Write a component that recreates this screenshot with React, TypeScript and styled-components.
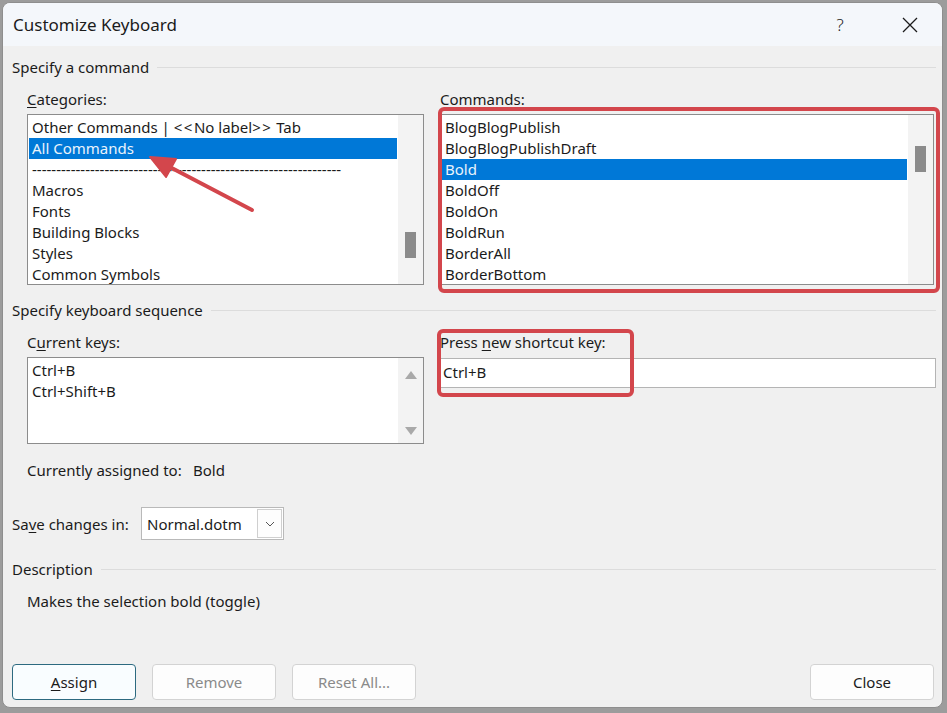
import React from "react";
import styled, { createGlobalStyle, css } from "styled-components";

const Global = createGlobalStyle`
  html, body { margin: 0; padding: 0; background: #9c9c9c; }
  body { font-family: "Noto Sans", "Open Sans", sans-serif; color: #1b1b1b; }
  * { box-sizing: border-box; }
`;

const Stage = styled.div`
  width: 947px;
  height: 713px;
  padding: 2px 0 0 2px;
  overflow: hidden;
`;

const Window = styled.div`
  position: relative;
  width: 941px;
  height: 706px;
  border: 1px solid #8e8e8e;
  border-radius: 8px;
  background: #f0f0f0;
  overflow: hidden;
  display: flex;
  flex-direction: column;
  font-size: 15px;
`;

const TitleBar = styled.div`
  height: 43px;
  flex: none;
  display: flex;
  align-items: center;
  padding-left: 10px;
  background: #f4f7fb;
`;

const Title = styled.div`
  font-size: 17px;
  flex: 1;
  padding-bottom: 1px;
`;

const TitleButton = styled.div<{ $w: number }>`
  width: ${(p) => p.$w}px;
  height: 43px;
  display: flex;
  align-items: center;
  justify-content: center;
  font-size: 17px;
  font-weight: 300;
  color: #222;
`;

const Content = styled.div`
  flex: 1;
  display: flex;
  flex-direction: column;
  padding: 0 6px 7px 9px;
`;

const GroupHeader = styled.div<{ $mt: number }>`
  display: flex;
  align-items: center;
  gap: 8px;
  height: 20px;
  margin-top: ${(p) => p.$mt}px;
  &::after {
    content: "";
    flex: 1;
    height: 1px;
    background: #dcdcdc;
  }
`;

const Indented = styled.div<{ $mt: number }>`
  margin-top: ${(p) => p.$mt}px;
  margin-left: 15px;
  display: grid;
  grid-template-columns: 397px 1fr;
  column-gap: 16px;
`;

const Column = styled.div`
  position: relative;
  display: flex;
  flex-direction: column;
`;

const Label = styled.div`
  height: 18px;
  line-height: 18px;
  margin-bottom: 6px;
  white-space: nowrap;
`;

const U = styled.span`
  text-decoration: underline;
  text-underline-offset: 2px;
`;

const ListBox = styled.div<{ $h: number; $w?: number }>`
  position: relative;
  height: ${(p) => p.$h}px;
  ${(p) => p.$w && `width: ${p.$w}px;`}
  background: #fff;
  border: 1px solid #8c8c8c;
  display: flex;
`;

const Items = styled.div`
  flex: 1;
  padding-top: 2px;
  overflow: hidden;
`;

const Item = styled.div<{ $sel?: boolean }>`
  height: 21px;
  line-height: 21px;
  padding-left: 3px;
  margin: 0 1px;
  white-space: nowrap;
  ${(p) =>
    p.$sel &&
    css`
      background: #0078d7;
      color: #eaf3fc;
    `}
`;

const Angle = styled.span`
  letter-spacing: 1.5px;
`;

const ScrollTrack = styled.div`
  width: 25px;
  flex: none;
  background: #f3f3f3;
  position: relative;
  display: flex;
  flex-direction: column;
  align-items: center;
`;

const Thumb = styled.div<{ $top: number }>`
  position: absolute;
  left: 7px;
  top: ${(p) => p.$top}px;
  width: 11px;
  height: 26px;
  background: #8b8b8b;
`;

const ArrowBtn = styled.div`
  height: 21px;
  width: 100%;
  display: flex;
  align-items: center;
  justify-content: center;
  margin-top: 6px;
  &:last-child {
    margin-top: auto;
    margin-bottom: 2px;
  }
`;

const TextInput = styled.div`
  margin-top: 1px;
  height: 30px;
  background: #fff;
  border: 1px solid #b4b4b4;
  padding-left: 2px;
  line-height: 27px;
`;

const Annotation = styled.div<{ $l: number; $t: number; $w: number; $h: number }>`
  position: absolute;
  left: ${(p) => p.$l}px;
  top: ${(p) => p.$t}px;
  width: ${(p) => p.$w}px;
  height: ${(p) => p.$h}px;
  border: 4px solid #d3464c;
  border-radius: 6px;
  pointer-events: none;
`;

const InfoRow = styled.div<{ $mt: number; $ml: number }>`
  display: flex;
  align-items: center;
  margin-top: ${(p) => p.$mt}px;
  margin-left: ${(p) => p.$ml}px;
  height: 18px;
  white-space: nowrap;
`;

const InfoLabel = styled.span<{ $w: number }>`
  width: ${(p) => p.$w}px;
  flex: none;
`;

const SaveRow = styled.div`
  display: flex;
  align-items: center;
  margin-top: 28px;
  height: 33px;
`;

const Select = styled.div`
  width: 143px;
  height: 33px;
  background: #fff;
  border: 1px solid #b9b9b9;
  display: flex;
  align-items: center;
  padding: 1px 1px 1px 5px;
`;

const SelectText = styled.span`
  flex: 1;
`;

const DropBtn = styled.div`
  width: 25px;
  height: 29px;
  border: 1px solid #cfcfcf;
  background: #fdfdfd;
  display: flex;
  align-items: center;
  justify-content: center;
`;

const ButtonRow = styled.div`
  margin-top: auto;
  display: flex;
  gap: 16px;
  padding-right: 2px;
`;

const Button = styled.div<{ $disabled?: boolean; $default?: boolean }>`
  width: 124px;
  height: 36px;
  border-radius: 4px;
  background: #fdfdfd;
  border: 1px solid #d3d3d3;
  display: flex;
  align-items: center;
  justify-content: center;
  color: ${(p) => (p.$disabled ? "#8a8a8a" : "#1b1b1b")};
  ${(p) =>
    p.$default &&
    css`
      border-color: #2d6a80;
      background: #f9fdff;
    `}
`;

const Spacer = styled.div`
  flex: 1;
`;

const Overlay = styled.svg`
  position: absolute;
  left: 0;
  top: 0;
  pointer-events: none;
`;

const categories: React.ReactNode[] = [
  <>
    Other Commands | <Angle>{"<<"}</Angle>No label<Angle>{">>"}</Angle> Tab
  </>,
  "All Commands",
  "-".repeat(64),
  "Macros",
  "Fonts",
  "Building Blocks",
  "Styles",
  "Common Symbols",
];

const commands = [
  "BlogBlogPublish",
  "BlogBlogPublishDraft",
  "Bold",
  "BoldOff",
  "BoldOn",
  "BoldRun",
  "BorderAll",
  "BorderBottom",
];

export default function App() {
  return (
    <>
      <Global />
      <Stage>
        <Window>
          <TitleBar>
            <Title>Customize Keyboard</Title>
            <TitleButton $w={76}>?</TitleButton>
            <TitleButton $w={64}>
              <svg width="16" height="16" viewBox="0 0 16 16">
                <path d="M1 1L15 15M15 1L1 15" stroke="#1b1b1b" strokeWidth="1.3" />
              </svg>
            </TitleButton>
          </TitleBar>
          <Content>
            <GroupHeader $mt={11}>Specify a command</GroupHeader>
            <Indented $mt={13}>
              <Column>
                <Label>
                  <U>C</U>ategories:
                </Label>
                <ListBox $h={171}>
                  <Items>
                    {categories.map((c, i) => (
                      <Item key={i} $sel={i === 1}>
                        {c}
                      </Item>
                    ))}
                  </Items>
                  <ScrollTrack>
                    <Thumb $top={117} />
                  </ScrollTrack>
                </ListBox>
              </Column>
              <Column>
                <Label>Commands:</Label>
                <ListBox $h={171} $w={494}>
                  <Items>
                    {commands.map((c, i) => (
                      <Item key={i} $sel={i === 2}>
                        {c}
                      </Item>
                    ))}
                  </Items>
                  <ScrollTrack>
                    <Thumb $top={31} />
                  </ScrollTrack>
                  <Annotation $l={-3} $t={-8} $w={502} $h={186} />
                </ListBox>
              </Column>
            </Indented>
            <GroupHeader $mt={15}>Specify keyboard sequence</GroupHeader>
            <Indented $mt={13}>
              <Column>
                <Label>
                  C<U>u</U>rrent keys:
                </Label>
                <ListBox $h={87}>
                  <Items>
                    <Item>Ctrl+B</Item>
                    <Item>Ctrl+Shift+B</Item>
                  </Items>
                  <ScrollTrack>
                    <ArrowBtn>
                      <svg width="12" height="8" viewBox="0 0 12 8">
                        <path d="M6 0L12 8H0Z" fill="#a9a9a9" />
                      </svg>
                    </ArrowBtn>
                    <ArrowBtn>
                      <svg width="12" height="8" viewBox="0 0 12 8">
                        <path d="M0 0H12L6 8Z" fill="#a9a9a9" />
                      </svg>
                    </ArrowBtn>
                  </ScrollTrack>
                </ListBox>
              </Column>
              <Column>
                <Label>
                  Press <U>n</U>ew shortcut key:
                </Label>
                <TextInput>Ctrl+B</TextInput>
                <Annotation $l={-3} $t={-4} $w={197} $h={68} />
              </Column>
            </Indented>
            <InfoRow $mt={17} $ml={15}>
              <InfoLabel $w={166}>Currently assigned to:</InfoLabel>
              <span>Bold</span>
            </InfoRow>
            <SaveRow>
              <InfoLabel $w={129}>
                Sa<U>v</U>e changes in:
              </InfoLabel>
              <Select>
                <SelectText>Normal.dotm</SelectText>
                <DropBtn>
                  <svg width="10" height="6" viewBox="0 0 10 6">
                    <path d="M1 1L5 5L9 1" fill="none" stroke="#555" strokeWidth="1" />
                  </svg>
                </DropBtn>
              </Select>
            </SaveRow>
            <GroupHeader $mt={19}>Description</GroupHeader>
            <InfoRow $mt={13} $ml={15}>
              Makes the selection bold (toggle)
            </InfoRow>
            <ButtonRow>
              <Button $default>
                <span>
                  <U>A</U>ssign
                </span>
              </Button>
              <Button $disabled>Remove</Button>
              <Button $disabled>Reset All...</Button>
              <Spacer />
              <Button>Close</Button>
            </ButtonRow>
          </Content>
          <Overlay width="941" height="706" viewBox="0 0 941 706">
            <g transform="translate(-3,-3)">
              <line x1="252" y1="210" x2="166" y2="165" stroke="#d3464c" strokeWidth="4" strokeLinecap="round" />
              <path d="M150 157 L176 159 L166 177 Z" fill="#d3464c" stroke="#d3464c" strokeWidth="2" strokeLinejoin="round" />
            </g>
          </Overlay>
        </Window>
      </Stage>
    </>
  );
}
